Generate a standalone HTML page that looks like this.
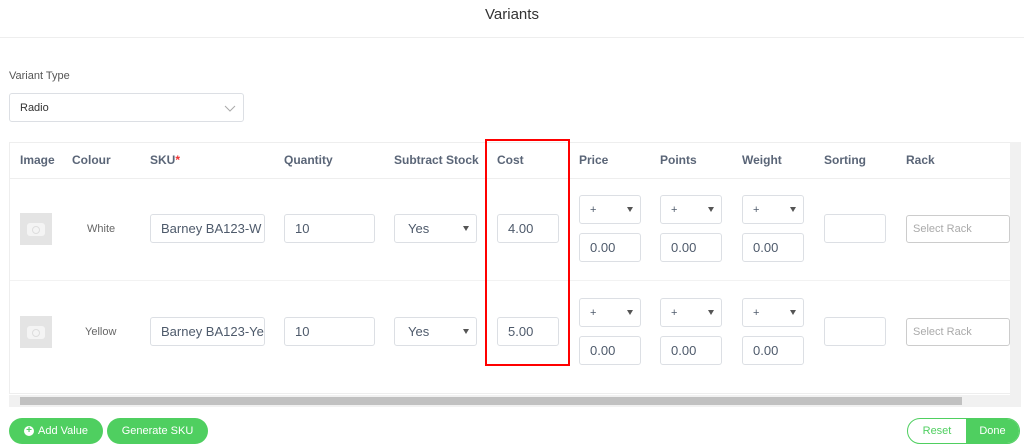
<!DOCTYPE html>
<html><head><style>
*{box-sizing:border-box;margin:0;padding:0}
body{width:1024px;height:445px;background:#fff;font-family:"Liberation Sans",sans-serif;position:relative;overflow:hidden;color:#4a5568}
.a{position:absolute}
.box{position:absolute;border:1px solid #dcdfe4;border-radius:3px;background:#fff;font-size:13px;color:#4e5a6b;padding-left:10px;display:flex;align-items:center}
.th{position:absolute;top:153px;font-size:12px;font-weight:bold;color:#5a6577}
.sel{justify-content:space-between;padding-right:7px}
.sel:after{content:"";border-left:3px solid transparent;border-right:3px solid transparent;border-top:5px solid #555}
.img{position:absolute;width:32px;height:32px;background:#e4e4e4}
.img:before{content:"";position:absolute;left:7px;top:10px;width:18px;height:13px;background:#f4f4f4;border-radius:3px}
.img:after{content:"";position:absolute;left:12px;top:13px;width:6px;height:6px;border:1px solid #ddd;border-radius:50%}
.btn{position:absolute;top:418px;height:26px;border-radius:13px;background:#4fcf60;color:#fff;font-size:11px;display:flex;align-items:center;justify-content:center}
</style></head><body>
<div class="a" style="left:0;top:6px;width:1024px;text-align:center;font-size:15px;color:#333">Variants</div>
<div class="a" style="left:0;top:37px;width:1024px;height:1px;background:#eee"></div>
<div class="a" style="left:9px;top:70px;font-size:11px;color:#555">Variant Type</div>
<div class="box" style="left:9px;top:93px;width:235px;height:29px;font-size:11px;color:#333">Radio
<svg class="a" style="left:214px;top:11px" width="12" height="7"><path d="M1 1L6 6L11 1" stroke="#aaa" fill="none"/></svg></div>

<div class="a" style="left:9px;top:142px;width:1002px;height:252px;border:1px solid #eee;border-right:none"></div>
<div class="a" style="left:10px;top:178px;width:1000px;height:1px;background:#eee"></div>
<div class="a" style="left:10px;top:280px;width:1000px;height:1px;background:#f2f2f2"></div>
<div class="a" style="left:1010px;top:142px;width:11px;height:253px;background:#f1f1f1"></div>
<div class="a" style="left:9px;top:395px;width:1012px;height:12px;background:#f1f1f1"></div>
<div class="a" style="left:20px;top:397px;width:942px;height:8px;background:#c1c1c1"></div>

<div class="th" style="left:20px">Image</div><div class="th" style="left:72px">Colour</div>
<div class="th" style="left:150px">SKU<span style="color:#e33">*</span></div>
<div class="th" style="left:284px">Quantity</div><div class="th" style="left:394px">Subtract Stock</div>
<div class="th" style="left:497px">Cost</div><div class="th" style="left:579px">Price</div>
<div class="th" style="left:660px">Points</div><div class="th" style="left:742px">Weight</div>
<div class="th" style="left:824px">Sorting</div><div class="th" style="left:906px">Rack</div>

<!-- row1 -->
<div class="img" style="left:20px;top:213px"></div>
<div class="a" style="left:87px;top:223px;font-size:11px;color:#666">White</div>
<div class="box" style="left:150px;top:214px;width:115px;height:29px;overflow:hidden;white-space:nowrap">Barney BA123-W</div>
<div class="box" style="left:284px;top:214px;width:91px;height:29px">10</div>
<div class="box sel" style="left:394px;top:214px;width:83px;height:29px;padding-left:13px">Yes</div>
<div class="box" style="left:497px;top:214px;width:62px;height:29px">4.00</div>
<div class="box sel" style="left:579px;top:195px;width:62px;height:29px;font-size:11px">+</div>
<div class="box" style="left:579px;top:233px;width:62px;height:29px">0.00</div>
<div class="box sel" style="left:660px;top:195px;width:62px;height:29px;font-size:11px">+</div>
<div class="box" style="left:660px;top:233px;width:62px;height:29px">0.00</div>
<div class="box sel" style="left:742px;top:195px;width:62px;height:29px;font-size:11px">+</div>
<div class="box" style="left:742px;top:233px;width:62px;height:29px">0.00</div>
<div class="box" style="left:824px;top:214px;width:62px;height:29px"></div>
<div class="box" style="left:906px;top:215px;width:104px;height:28px;font-size:11px;color:#aaa;border-color:#ccc;padding-left:6px">Select Rack</div>
<!-- row2 -->
<div class="img" style="left:20px;top:316px"></div>
<div class="a" style="left:85px;top:326px;font-size:11px;color:#666">Yellow</div>
<div class="box" style="left:150px;top:317px;width:115px;height:29px;overflow:hidden;white-space:nowrap">Barney BA123-Yellow</div>
<div class="box" style="left:284px;top:317px;width:91px;height:29px">10</div>
<div class="box sel" style="left:394px;top:317px;width:83px;height:29px;padding-left:13px">Yes</div>
<div class="box" style="left:497px;top:317px;width:62px;height:29px">5.00</div>
<div class="box sel" style="left:579px;top:298px;width:62px;height:29px;font-size:11px">+</div>
<div class="box" style="left:579px;top:336px;width:62px;height:29px">0.00</div>
<div class="box sel" style="left:660px;top:298px;width:62px;height:29px;font-size:11px">+</div>
<div class="box" style="left:660px;top:336px;width:62px;height:29px">0.00</div>
<div class="box sel" style="left:742px;top:298px;width:62px;height:29px;font-size:11px">+</div>
<div class="box" style="left:742px;top:336px;width:62px;height:29px">0.00</div>
<div class="box" style="left:824px;top:317px;width:62px;height:29px"></div>
<div class="box" style="left:906px;top:318px;width:104px;height:28px;font-size:11px;color:#aaa;border-color:#ccc;padding-left:6px">Select Rack</div>

<div class="a" style="left:485px;top:139px;width:85px;height:227px;border:2px solid #f00"></div>

<div class="btn" style="left:9px;width:94px"><span style="display:inline-block;width:10px;height:10px;border-radius:50%;background:#fff;color:#4fcf60;font-size:10px;line-height:10px;text-align:center;margin-right:4px;font-weight:bold">+</span>Add Value</div>
<div class="btn" style="left:107px;width:101px">Generate SKU</div>
<div class="a" style="left:907px;top:418px;width:113px;height:26px;border:1px solid #4fcf60;border-radius:13px;overflow:hidden;display:flex;font-size:11px">
<div style="width:58px;color:#4fcf60;display:flex;align-items:center;justify-content:center">Reset</div>
<div style="flex:1;background:#4fcf60;color:#fff;display:flex;align-items:center;justify-content:center">Done</div></div>
</body></html>
